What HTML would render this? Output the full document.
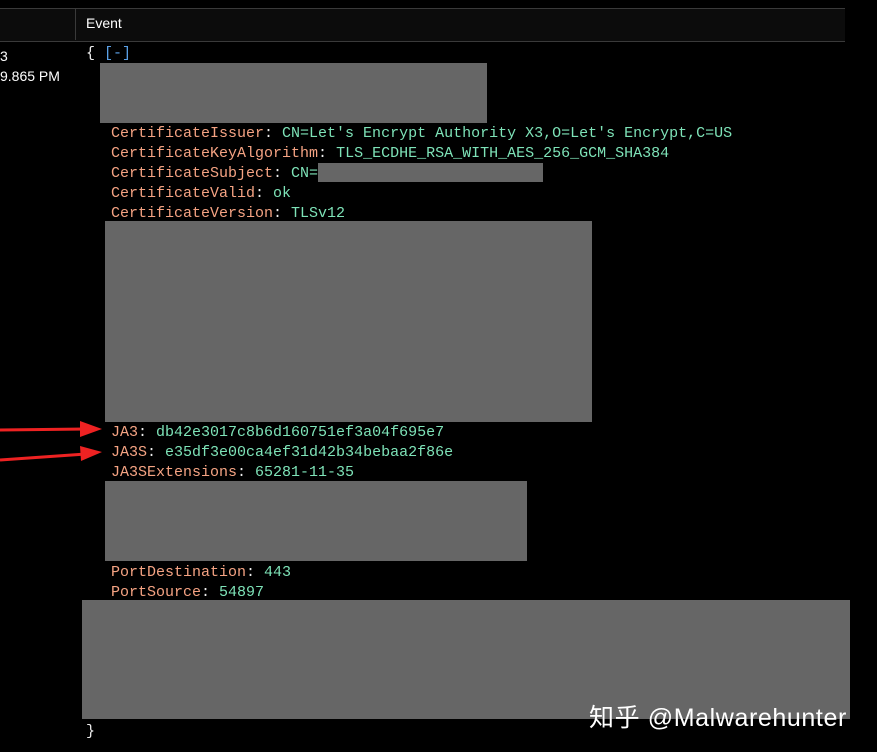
<!DOCTYPE html>
<html><head><meta charset="utf-8"><style>
html,body{margin:0;padding:0;background:#000;width:877px;height:752px;overflow:hidden;position:relative}
.a{position:absolute}
.m{font-family:"Liberation Mono",monospace;font-size:15px;line-height:20px;white-space:pre}
.k{color:#f5a383}.v{color:#7ee3b8}.w{color:#eee}.b{color:#5aa0e6}
.g{position:absolute;background:#666}
.s{font-family:"Liberation Sans",sans-serif;color:#fff;font-size:14px}
</style></head><body>
<div class="a" style="left:0;top:8px;width:845px;height:32px;background:#0c0c0c;border-top:1px solid #3a3a3a;border-bottom:1px solid #3a3a3a"></div>
<div class="a" style="left:75px;top:9px;width:1px;height:31px;background:#3a3a3a"></div>
<div class="a s" style="left:86px;top:15px">Event</div>
<div class="a s" style="left:0;top:46px;line-height:20px">3<br>9.865 PM</div>
<div class="a m w" style="left:86px;top:44px">{ <span class="b">[-]</span></div>
<div class="g" style="left:100px;top:63px;width:387px;height:60px"></div>
<div class="a m" style="left:111px;top:124px"><span class="k">CertificateIssuer</span><span class="w">: </span><span class="v">CN=Let's Encrypt Authority X3,O=Let's Encrypt,C=US</span>
<span class="k">CertificateKeyAlgorithm</span><span class="w">: </span><span class="v">TLS_ECDHE_RSA_WITH_AES_256_GCM_SHA384</span>
<span class="k">CertificateSubject</span><span class="w">: </span><span class="v">CN=</span>
<span class="k">CertificateValid</span><span class="w">: </span><span class="v">ok</span>
<span class="k">CertificateVersion</span><span class="w">: </span><span class="v">TLSv12</span></div>
<div class="g" style="left:318px;top:163px;width:225px;height:19px"></div>
<div class="g" style="left:105px;top:221px;width:487px;height:201px"></div>
<div class="a m" style="left:111px;top:423px"><span class="k">JA3</span><span class="w">: </span><span class="v">db42e3017c8b6d160751ef3a04f695e7</span>
<span class="k">JA3S</span><span class="w">: </span><span class="v">e35df3e00ca4ef31d42b34bebaa2f86e</span>
<span class="k">JA3SExtensions</span><span class="w">: </span><span class="v">65281-11-35</span></div>
<div class="g" style="left:105px;top:481px;width:422px;height:80px"></div>
<div class="a m" style="left:111px;top:563px"><span class="k">PortDestination</span><span class="w">: </span><span class="v">443</span>
<span class="k">PortSource</span><span class="w">: </span><span class="v">54897</span></div>
<div class="g" style="left:82px;top:600px;width:768px;height:119px"></div>
<div class="a m w" style="left:86px;top:722px">}</div>
<svg class="a" style="left:0;top:415px" width="110" height="55">
<line x1="0" y1="15" x2="86" y2="14" stroke="#e22" stroke-width="3"/>
<polygon points="80,6 102,14 80,22" fill="#e22"/>
<line x1="0" y1="45" x2="86" y2="39" stroke="#e22" stroke-width="3"/>
<polygon points="80,31 102,37 81,46" fill="#e22"/>
</svg>
<div class="a" style="left:589px;top:698px;font-family:'Liberation Sans','Noto Sans CJK SC',sans-serif;font-size:25px;letter-spacing:0.6px;color:#fff">知乎 @Malwarehunter</div>
</body></html>
